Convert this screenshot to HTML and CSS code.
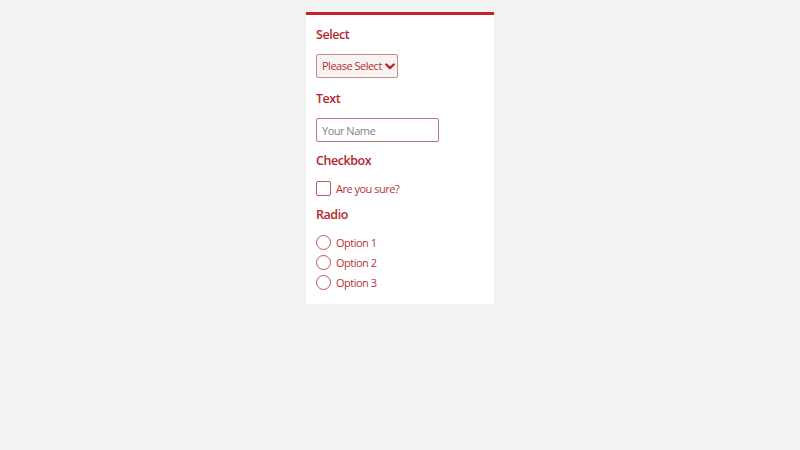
FILE: index.html
```html
<!DOCTYPE html>
<html>
<head>
<meta charset="utf-8">
<link rel="stylesheet" href="styles.css">
</head>
<body>
<form class="card">
  <h2 class="label">Select</h2>
  <div class="select-wrap">
    <select class="select">
      <option>Please Select</option>
    </select>
    <svg class="chev" viewBox="0 0 10 8" width="10" height="8"><path d="M1.3 1.5 L5 5.2 L8.7 1.5" fill="none" stroke="#c0252b" stroke-width="2.4" stroke-linecap="round" stroke-linejoin="round"/></svg>
  </div>

  <h2 class="label">Text</h2>
  <input class="text" type="text" placeholder="Your Name">

  <h2 class="label">Checkbox</h2>
  <label class="opt"><input class="box" type="checkbox"><span>Are you sure?</span></label>

  <h2 class="label">Radio</h2>
  <div class="radios">
    <label class="opt row"><input class="circle" type="radio" name="r"><span>Option 1</span></label>
    <label class="opt row"><input class="circle" type="radio" name="r"><span>Option 2</span></label>
    <label class="opt row"><input class="circle" type="radio" name="r"><span>Option 3</span></label>
  </div>
</form>
</body>
</html>
```
FILE: styles.css
```css
html, body {
  margin: 0;
  padding: 0;
  background: #f3f3f3;
  font-family: "Open Sans", "Liberation Sans", sans-serif;
}
body {
  display: flex;
  justify-content: center;
  padding-top: 12px;
}
.card {
  width: 168px;
  background: #ffffff;
  border-top: 3px solid #c0252b;
  padding: 11px 10px 12px 10px;
  box-shadow: 0 2px 2px rgba(0,0,0,0.09);
  display: flex;
  flex-direction: column;
  align-items: flex-start;
}
.label {
  margin: 0 0 10px 0;
  font-size: 12.5px;
  line-height: 18px;
  font-weight: 600;
  letter-spacing: -0.45px;
  color: #b3272c;
}
.select-wrap {
  position: relative;
  margin-bottom: 12px;
}
.select {
  display: block;
  appearance: none;
  -webkit-appearance: none;
  width: 82px;
  height: 24px;
  box-sizing: border-box;
  margin: 0;
  padding: 0 0 0 5px;
  border: 1px solid #c98a8b;
  border-radius: 2px;
  background: #f7f3f3;
  color: #bb2c30;
  font-family: inherit;
  font-size: 11px;
  letter-spacing: -0.5px;
  line-height: 22px;
  outline: none;
}
.chev {
  position: absolute;
  left: 69px;
  top: 9px;
  pointer-events: none;
}
.text {
  display: block;
  width: 123px;
  height: 24px;
  box-sizing: border-box;
  margin: 0 0 10px 0;
  padding: 0 5px;
  border: 1px solid #c47677;
  border-radius: 2px;
  background: #fff;
  font-family: inherit;
  font-size: 11px;
  letter-spacing: -0.5px;
  color: #333;
  outline: none;
}
.text::placeholder {
  color: #858585;
}
.opt {
  display: flex;
  align-items: center;
  gap: 5px;
  font-size: 11px;
  letter-spacing: -0.5px;
  color: #b33538;
  height: 16px;
}
.opt:not(.row) {
  margin-bottom: 10px;
}
.box, .circle {
  appearance: none;
  -webkit-appearance: none;
  margin: 0;
  width: 15px;
  height: 15px;
  border: 1px solid #b9595b;
  background: #fff;
  box-sizing: border-box;
  flex: none;
}
.box {
  border-radius: 2px;
}
.circle {
  border-radius: 50%;
}
.radios {
  display: flex;
  flex-direction: column;
}
.row {
  height: 20px;
}
.radios .row:first-child {
  margin-top: -2px;
}
```
